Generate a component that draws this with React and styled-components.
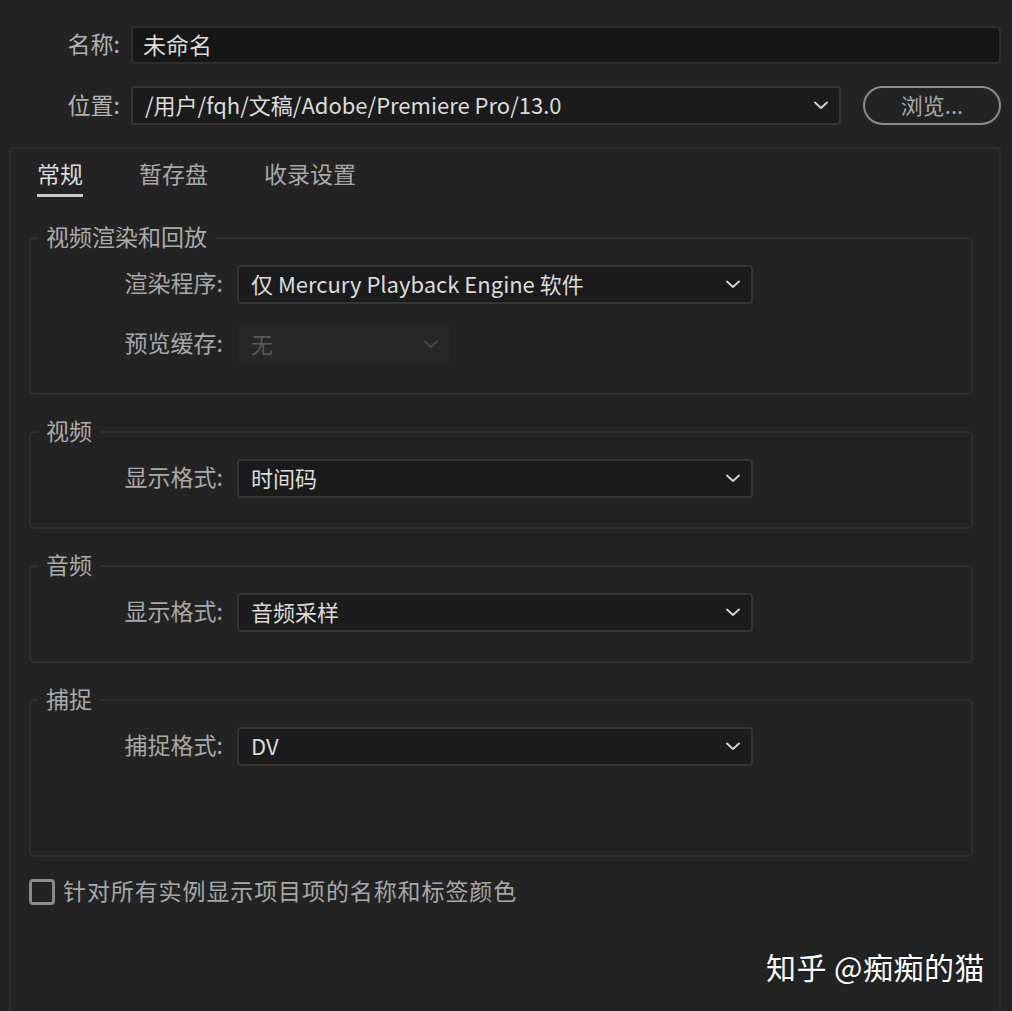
import React from "react";
import styled, { createGlobalStyle } from "styled-components";

const Global = createGlobalStyle`
  html, body { margin: 0; padding: 0; background: #232323; }
  body {
    width: 1012px; height: 1011px; overflow: hidden;
    font-family: "Noto Sans CJK SC", "Noto Sans", sans-serif;
    -webkit-font-smoothing: antialiased;
  }
  * { box-sizing: border-box; }
`;

const Page = styled.div`
  position: relative;
  width: 1012px;
  height: 1011px;
  padding-top: 26px;
  background: #232323;
  display: flex;
  flex-direction: column;
`;

const TopRow = styled.div`
  display: flex;
  align-items: center;
  padding-right: 11px;
  margin-bottom: ${(p) => p.$mb || 0}px;
`;

const TopLabel = styled.div`
  width: 120px;
  text-align: right;
  font-size: 23px;
  color: #b2b2b2;
  margin-right: 11px;
  line-height: 30px;
  padding-bottom: 4px;
`;

const TextInput = styled.div`
  flex: 1;
  height: 38px;
  background: #161616;
  border: 2px solid #2e2e2e;
  border-radius: 4px;
  padding: 0 0 3px 10px;
  display: flex;
  align-items: center;
  font-size: 23px;
  color: #dadada;
`;

const Select = styled.div`
  position: relative;
  flex: ${(p) => (p.$grow ? 1 : "none")};
  width: ${(p) => (p.$w ? `${p.$w}px` : "auto")};
  height: 39px;
  background: ${(p) => (p.$disabled ? "#272727" : "#1b1b1b")};
  border: 2px solid ${(p) => (p.$disabled ? "#272727" : "#353535")};
  border-radius: 4px;
  padding: 0 40px 4px 12px;
  display: flex;
  align-items: center;
  font-size: 22px;
  color: ${(p) => (p.$disabled ? "#5a5a5a" : "#dcdcdc")};
  white-space: nowrap;
`;

const Chevron = styled.svg`
  position: absolute;
  right: 10px;
  top: 50%;
  width: 16px;
  height: 10px;
  margin-top: -6px;
`;

const ChevronIcon = ({ disabled }) => (
  <Chevron viewBox="0 0 16 10">
    <path
      d="M2 2.5 L8 8 L14 2.5"
      fill="none"
      stroke={disabled ? "#4a4a4a" : "#d0d0d0"}
      strokeWidth="2"
      strokeLinecap="round"
      strokeLinejoin="round"
    />
  </Chevron>
);

const BrowseButton = styled.button`
  margin-left: 22px;
  width: 138px;
  height: 39px;
  border-radius: 20px;
  border: 2.5px solid #8a8a8a;
  background: transparent;
  color: #a8a8a8;
  font-family: inherit;
  font-size: 22px;
  padding: 0 0 4px 0;
  display: flex;
  align-items: center;
  justify-content: center;
`;

const Panel = styled.div`
  margin: 22px 11px 0 9px;
  flex: 1;
  min-height: 900px;
  border: 2px solid #2d2d2d;
  border-bottom: none;
  border-radius: 4px 4px 0 0;
  padding: 9px 26px 0 18px;
`;

const Tabs = styled.div`
  display: flex;
  gap: 56px;
  padding-left: 8px;
  margin-bottom: 26px;
`;

const Tab = styled.div`
  font-size: 23px;
  line-height: 30px;
  color: ${(p) => (p.$active ? "#dcdcdc" : "#a8a8a8")};
  padding-bottom: 6px;
  border-bottom: 3px solid ${(p) => (p.$active ? "#c8c8c8" : "transparent")};
`;

const Group = styled.fieldset`
  margin: 0 0 22px 0;
  padding: 12px 0 ${(p) => p.$pb || 29}px 0;
  border: 2px solid #2f2f2f;
  border-radius: 5px;
  display: flex;
  flex-direction: column;
  gap: 21px;
  min-inline-size: 0;
`;

const Legend = styled.legend`
  margin-left: 7px;
  padding: 0 8px 4px 8px;
  font-size: 23px;
  line-height: 26px;
  color: #ababab;
`;

const Row = styled.div`
  display: flex;
  align-items: center;
`;

const RowLabel = styled.div`
  width: 192px;
  text-align: right;
  margin-right: 14px;
  font-size: 23px;
  color: #a8a8a8;
  padding-bottom: 5px;
`;

const CheckRow = styled.label`
  display: flex;
  align-items: center;
  margin-top: -2px;
`;

const CheckBox = styled.span`
  width: 26px;
  height: 26px;
  border: 3px solid #8a8a8a;
  border-radius: 4px;
  margin-right: 8px;
`;

const CheckText = styled.span`
  font-size: 23px;
  line-height: 26px;
  padding-bottom: 3px;
  letter-spacing: 0.9px;
  color: #a8a8a8;
`;

const Watermark = styled.div`
  position: absolute;
  right: 27px;
  top: 946px;
  font-size: 30px;
  line-height: 40px;
  color: #ffffff;
  text-shadow: 0 0 2px rgba(0, 0, 0, 0.6);
  letter-spacing: 0.5px;
`;

export default function App() {
  return (
    <>
      <Global />
      <Page>
        <TopRow $mb={22}>
          <TopLabel>名称:</TopLabel>
          <TextInput>未命名</TextInput>
        </TopRow>
        <TopRow>
          <TopLabel>位置:</TopLabel>
          <Select $grow>
            /用户/fqh/文稿/Adobe/Premiere Pro/13.0
            <ChevronIcon />
          </Select>
          <BrowseButton>浏览...</BrowseButton>
        </TopRow>
        <Panel>
          <Tabs>
            <Tab $active>常规</Tab>
            <Tab>暂存盘</Tab>
            <Tab>收录设置</Tab>
          </Tabs>

          <Group>
            <Legend>视频渲染和回放</Legend>
            <Row>
              <RowLabel>渲染程序:</RowLabel>
              <Select $w={516}>
                仅 Mercury Playback Engine 软件
                <ChevronIcon />
              </Select>
            </Row>
            <Row>
              <RowLabel>预览缓存:</RowLabel>
              <Select $w={214} $disabled>
                无
                <ChevronIcon disabled />
              </Select>
            </Row>
          </Group>

          <Group>
            <Legend>视频</Legend>
            <Row>
              <RowLabel>显示格式:</RowLabel>
              <Select $w={516}>
                时间码
                <ChevronIcon />
              </Select>
            </Row>
          </Group>

          <Group>
            <Legend>音频</Legend>
            <Row>
              <RowLabel>显示格式:</RowLabel>
              <Select $w={516}>
                音频采样
                <ChevronIcon />
              </Select>
            </Row>
          </Group>

          <Group $pb={89}>
            <Legend>捕捉</Legend>
            <Row>
              <RowLabel>捕捉格式:</RowLabel>
              <Select $w={516}>
                DV
                <ChevronIcon />
              </Select>
            </Row>
          </Group>

          <CheckRow>
            <CheckBox />
            <CheckText>针对所有实例显示项目项的名称和标签颜色</CheckText>
          </CheckRow>
        </Panel>
        <Watermark>知乎 @痴痴的猫</Watermark>
      </Page>
    </>
  );
}
